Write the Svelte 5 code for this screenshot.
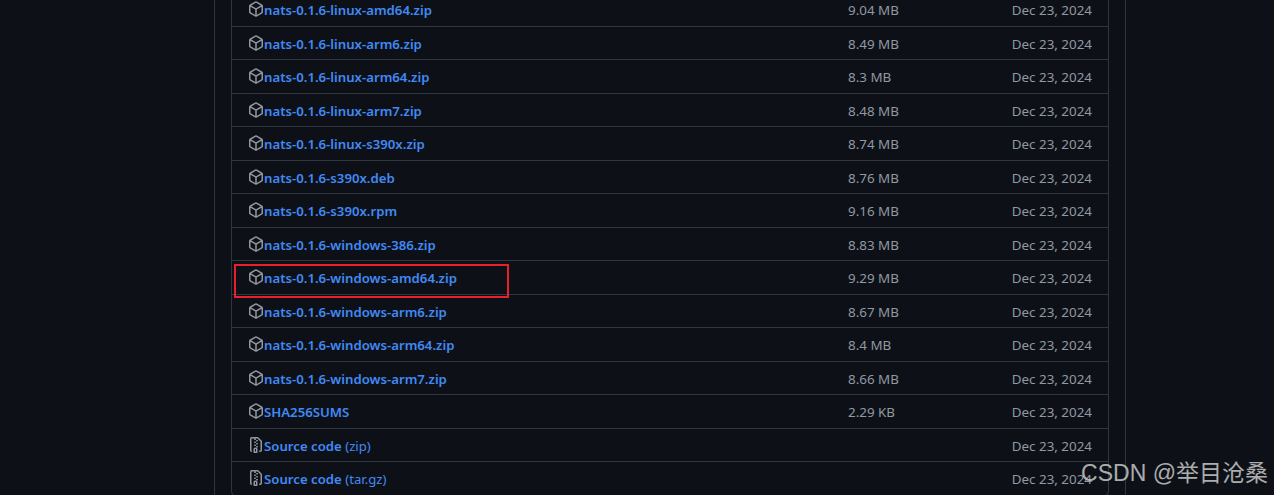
<script>
  const assets = [
    { name: 'nats-0.1.6-linux-amd64.zip', size: '9.04 MB' },
    { name: 'nats-0.1.6-linux-arm6.zip', size: '8.49 MB' },
    { name: 'nats-0.1.6-linux-arm64.zip', size: '8.3 MB' },
    { name: 'nats-0.1.6-linux-arm7.zip', size: '8.48 MB' },
    { name: 'nats-0.1.6-linux-s390x.zip', size: '8.74 MB' },
    { name: 'nats-0.1.6-s390x.deb', size: '8.76 MB' },
    { name: 'nats-0.1.6-s390x.rpm', size: '9.16 MB' },
    { name: 'nats-0.1.6-windows-386.zip', size: '8.83 MB' },
    { name: 'nats-0.1.6-windows-amd64.zip', size: '9.29 MB', marked: true },
    { name: 'nats-0.1.6-windows-arm6.zip', size: '8.67 MB' },
    { name: 'nats-0.1.6-windows-arm64.zip', size: '8.4 MB' },
    { name: 'nats-0.1.6-windows-arm7.zip', size: '8.66 MB' },
    { name: 'SHA256SUMS', size: '2.29 KB' },
    { name: 'Source code', suffix: '(zip)', source: true },
    { name: 'Source code', suffix: '(tar.gz)', source: true }
  ];

  const pkg =
    'm8.878.392 5.25 3.045c.54.314.872.89.872 1.514v6.098a1.75 1.75 0 0 1-.872 1.514l-5.25 3.045a1.75 1.75 0 0 1-1.756 0l-5.25-3.045A1.75 1.75 0 0 1 1 11.049V4.951c0-.624.332-1.201.872-1.514L7.122.392a1.75 1.75 0 0 1 1.756 0ZM7.875 1.69l-4.63 2.685L8 7.133l4.755-2.758-4.63-2.685a.248.248 0 0 0-.25 0ZM2.5 5.677v5.372c0 .09.047.171.125.216l4.625 2.683V8.432Zm6.25 8.271 4.625-2.683a.25.25 0 0 0 .125-.216V5.677L8.75 8.432Z';
  const zip =
    'M3.5 1.75v11.5c0 .09.048.173.126.217a.75.75 0 0 1-.752 1.298A1.748 1.748 0 0 1 2 13.25V1.75C2 .784 2.784 0 3.75 0h5.586c.464 0 .909.185 1.237.513l2.914 2.914c.329.328.513.773.513 1.237v8.586A1.75 1.75 0 0 1 12.25 15h-.5a.75.75 0 0 1 0-1.5h.5a.25.25 0 0 0 .25-.25V4.664a.25.25 0 0 0-.073-.177L9.513 1.573a.25.25 0 0 0-.177-.073H7.25a.75.75 0 0 1 0 1.5h-.5a.75.75 0 0 1 0-1.5h-3a.25.25 0 0 0-.25.25Zm3.75 8.75h.5c.966 0 1.75.784 1.75 1.75v3a.75.75 0 0 1-.75.75h-2.5a.75.75 0 0 1-.75-.75v-3c0-.966.784-1.75 1.75-1.75ZM6 5.25a.75.75 0 0 1 .75-.75h.5a.75.75 0 0 1 0 1.5h-.5A.75.75 0 0 1 6 5.25Zm.75 2.25h.5a.75.75 0 0 1 0 1.5h-.5a.75.75 0 0 1 0-1.5ZM8 6.75A.75.75 0 0 1 8.75 6h.5a.75.75 0 0 1 0 1.5h-.5A.75.75 0 0 1 8 6.75ZM8.75 3h.5a.75.75 0 0 1 0 1.5h-.5a.75.75 0 0 1 0-1.5ZM8 9.75A.75.75 0 0 1 8.75 9h.5a.75.75 0 0 1 0 1.5h-.5A.75.75 0 0 1 8 9.75Zm-1 2.5v2.25h1v-2.25a.25.25 0 0 0-.25-.25h-.5a.25.25 0 0 0-.25.25Z';
</script>

<div class="page">
  <div class="timeline">
    <ul class="assets">
      {#each assets as asset}
        <li class="row">
          <div class="name">
            <svg class="icon" viewBox="0 0 16 16" width="16" height="16" fill="currentColor">
              <path d={asset.source ? zip : pkg} />
            </svg>
            <a href="#top">{asset.name}{#if asset.suffix}&nbsp;<span class="suffix">{asset.suffix}</span>{/if}</a>
          </div>
          <span class="size">{asset.size ?? ''}</span>
          <span class="date">Dec 23, 2024</span>
          {#if asset.marked}
            <span class="mark"></span>
          {/if}
        </li>
      {/each}
    </ul>
  </div>
  <div class="watermark">CSDN @举目沧桑</div>
</div>

<style>
  :global(body) {
    margin: 0;
    background: #0d1117;
  }

  .page {
    position: relative;
    height: 495px;
    overflow: hidden;
    background: #0d1117;
    font-family: "Noto Sans", "Liberation Sans", sans-serif;
    font-size: 13.4px;
  }

  .timeline {
    display: flow-root;
    box-sizing: border-box;
    width: 912px;
    margin-left: 214px;
    padding: 0 16px;
    border-left: 1px solid #30363d;
    border-right: 1px solid #30363d;
    height: 495px;
  }

  .assets {
    list-style: none;
    margin: -7px 0 0;
    padding: 0;
    border: 1px solid #30363d;
    border-top: 0;
    border-radius: 0 0 6px 6px;
    box-sizing: border-box;
    width: 878px;
  }

  .row {
    position: relative;
    box-sizing: border-box;
    height: 33.5px;
    display: flex;
    align-items: center;
    padding: 2px 16px 0;
    border-bottom: 1px solid #30363d;
    color: #9198a1;
  }

  .row:last-child {
    border-bottom-color: transparent;
  }

  .name {
    display: flex;
    align-items: center;
    width: 600px;
  }

  .icon {
    flex: none;
    margin-top: -2px;
    color: #9198a1;
  }

  a {
    color: #4189f5;
    font-size: 13.2px;
    font-weight: 600;
    text-decoration: none;
    white-space: nowrap;
  }

  .suffix {
    font-weight: 400;
  }

  .size {
    width: 120px;
    margin-left: 0;
  }

  .date {
    margin-left: auto;
  }

  .mark {
    position: absolute;
    left: 2px;
    top: 3px;
    width: 275px;
    height: 34px;
    box-sizing: border-box;
    border: 2px solid #e8202a;
  }

  .watermark {
    position: absolute;
    right: 6px;
    bottom: 7px;
    color: #c8c8c8;
    opacity: 0.85;
    font-family: "Liberation Sans", "Noto Sans CJK SC", sans-serif;
    font-size: 23px;
  }
</style>
